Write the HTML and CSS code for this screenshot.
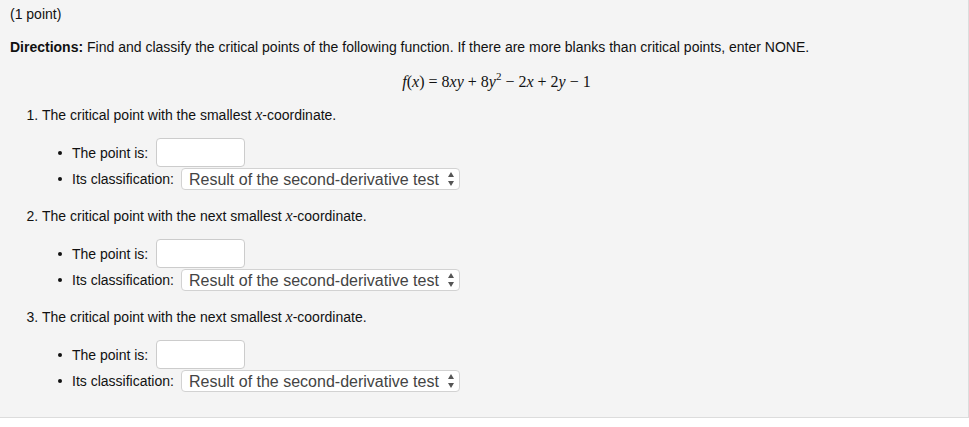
FILE: index.html
```html
<!DOCTYPE html>
<html>
<head>
<meta charset="utf-8">
<link rel="stylesheet" href="styles.css">
</head>
<body>
<div class="panel">
  <p class="points">(1 point)</p>
  <p class="directions"><b>Directions:</b> Find and classify the critical points of the following function. If there are more blanks than critical points, enter NONE.</p>
  <div class="formula"><i>f</i>(<i>x</i>) = 8<i>xy</i> + 8<i>y</i><sup>2</sup> &minus; 2<i>x</i> + 2<i>y</i> &minus; 1</div>
  <ol class="items">
    <li>
      <p class="q">The critical point with the smallest <i class="mv">x</i>-coordinate.</p>
      <ul class="sub">
        <li class="row row-point"><span>The point is:</span><input class="answer" type="text"></li>
        <li class="row row-class"><span>Its classification:</span><span class="sel-wrap"><select class="sel"><option>Result of the second-derivative test</option></select><svg class="arrows" width="6" height="14" viewBox="0 0 6 14"><path d="M3 0 L6 5 L0 5 Z M3 14 L6 9 L0 9 Z" fill="#555"/></svg></span></li>
      </ul>
    </li>
    <li>
      <p class="q">The critical point with the next smallest <i class="mv">x</i>-coordinate.</p>
      <ul class="sub">
        <li class="row row-point"><span>The point is:</span><input class="answer" type="text"></li>
        <li class="row row-class"><span>Its classification:</span><span class="sel-wrap"><select class="sel"><option>Result of the second-derivative test</option></select><svg class="arrows" width="6" height="14" viewBox="0 0 6 14"><path d="M3 0 L6 5 L0 5 Z M3 14 L6 9 L0 9 Z" fill="#555"/></svg></span></li>
      </ul>
    </li>
    <li>
      <p class="q">The critical point with the next smallest <i class="mv">x</i>-coordinate.</p>
      <ul class="sub">
        <li class="row row-point"><span>The point is:</span><input class="answer" type="text"></li>
        <li class="row row-class"><span>Its classification:</span><span class="sel-wrap"><select class="sel"><option>Result of the second-derivative test</option></select><svg class="arrows" width="6" height="14" viewBox="0 0 6 14"><path d="M3 0 L6 5 L0 5 Z M3 14 L6 9 L0 9 Z" fill="#555"/></svg></span></li>
      </ul>
    </li>
  </ol>
</div>
</body>
</html>
```
FILE: styles.css
```css
html, body {
  margin: 0;
  padding: 0;
  background: #ffffff;
}
body {
  font-family: "Liberation Sans", Arial, sans-serif;
  font-size: 14px;
  line-height: 20px;
  color: #111;
}
.panel {
  width: 948px;
  height: 413px;
  padding: 4px 10px 0 10px;
  background: #f4f4f4;
  border-right: 1px solid #dcdcdc;
  border-bottom: 1px solid #dcdcdc;
}
.points {
  margin: 0;
}
.directions {
  margin: 13px 0 0 0;
}
.formula {
  margin: 13px 0 0 0;
  text-align: center;
  font-family: "Liberation Serif", "Times New Roman", serif;
  font-size: 16px;
  line-height: 24px;
  color: #111;
  padding-left: 25px;
}
.formula sup {
  font-size: 11px;
  line-height: 0;
  vertical-align: 7px;
}
.items {
  margin: 11px 0 0 0;
  padding-left: 32px;
}
.items > li {
  margin-bottom: 16px;
}
.q {
  margin: 0;
}
.mv {
  font-family: "Liberation Serif", "Times New Roman", serif;
  font-size: 16px;
}
.sub {
  margin: 13px 0 0 0;
  padding-left: 16px;
  list-style: none;
}
.row {
  display: flex;
  align-items: center;
  line-height: 16px;
}
.row::before {
  content: "";
  width: 4px;
  height: 4px;
  border-radius: 50%;
  background: #111;
  margin-right: 10px;
  flex: none;
}
.row-point {
  height: 29px;
  margin-bottom: 1px;
}
.row-class {
  height: 22px;
}
.answer {
  box-sizing: border-box;
  width: 89px;
  height: 29px;
  margin: 0 0 0 8px;
  border: 1px solid #cccccc;
  border-radius: 4px;
  background: #fff;
  padding: 0 6px;
  font-family: "Liberation Sans", Arial, sans-serif;
  font-size: 14px;
}
.sel-wrap {
  position: relative;
  display: block;
  margin-left: 7px;
}
.sel {
  -webkit-appearance: none;
  appearance: none;
  box-sizing: border-box;
  width: 279px;
  height: 22px;
  border: 1px solid #d2d2d2;
  border-radius: 4px;
  background: #fff;
  font-family: "Liberation Sans", Arial, sans-serif;
  font-size: 16px;
  color: #444;
  padding: 0 0 0 7px;
  margin: 0;
  display: block;
}
.arrows {
  position: absolute;
  right: 6px;
  top: 4px;
}
```
